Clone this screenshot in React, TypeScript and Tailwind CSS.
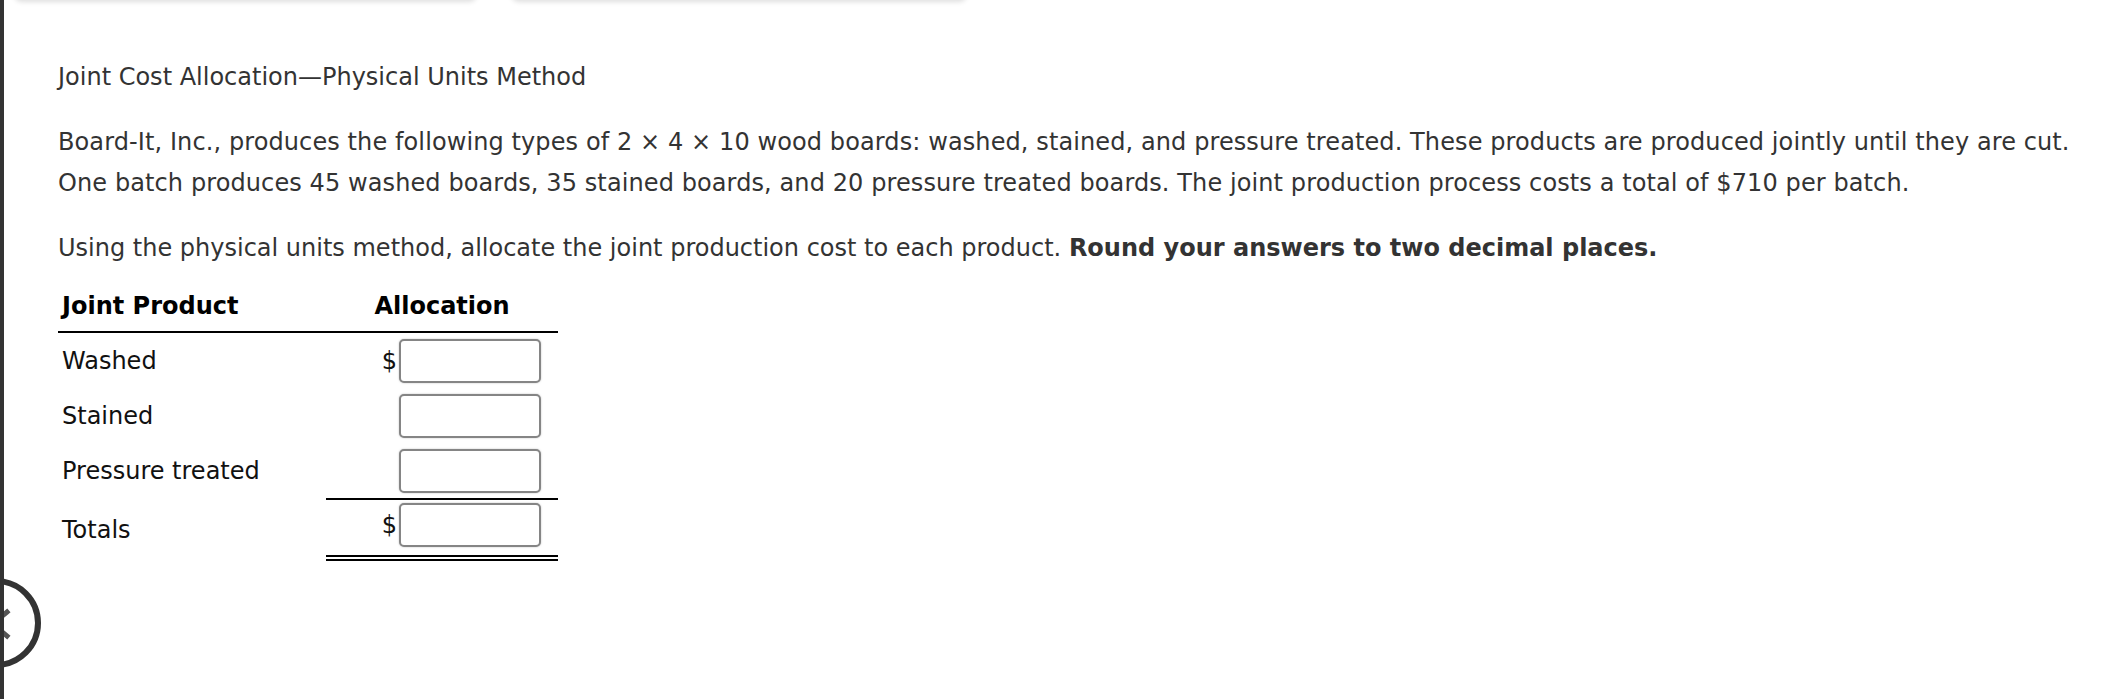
import React from "react";

const font = { fontFamily: '"DejaVu Sans", Verdana, sans-serif' };

function Box() {
  return (
    <div className="w-[142px] h-[44px] rounded-[5px] border-2 border-[#858585] bg-white shadow-[0_0_2px_rgba(0,0,0,0.25)]" />
  );
}

function Row({ label, dollar }: { label: string; dollar?: boolean }) {
  return (
    <>
      <div className="h-[55px] flex items-center pl-[4px] text-[24px] text-[#111]">{label}</div>
      <div className="h-[55px] flex items-center justify-end pr-[17px]">
        <span className="w-[18px] text-right text-[24px] text-[#111] mr-[2px]">{dollar ? "$" : ""}</span>
        <Box />
      </div>
    </>
  );
}

export default function App() {
  return (
    <div className="relative h-[699px] w-full overflow-hidden bg-white border-l-4 border-[#333]" style={font}>
      {/* top cards */}
      <div className="flex h-[20px] -mt-[20px] pl-[10px] gap-[34px]">
        <div className="w-[463px] h-[20px] bg-white rounded-b-lg shadow-[0_2px_5px_rgba(0,0,0,0.13)]" />
        <div className="w-[456px] h-[20px] bg-white rounded-b-lg shadow-[0_2px_5px_rgba(0,0,0,0.13)]" />
      </div>

      <div className="pl-[54px] pt-[57px] text-[#333] text-[24px] leading-[41px]">
        <div className="whitespace-nowrap">Joint Cost Allocation—Physical Units Method</div>
        <div className="mt-[24px] whitespace-nowrap tracking-[0.1px]">
          <div>
            Board-It, Inc., produces the following types of 2 × 4 × 10 wood boards: washed, stained, and pressure
            treated. These products are produced jointly until they are cut.
          </div>
          <div>
            One batch produces 45 washed boards, 35 stained boards, and 20 pressure treated boards. The joint
            production process costs a total of $710 per batch.
          </div>
        </div>
        <div className="mt-[24px] whitespace-nowrap">
          Using the physical units method, allocate the joint production cost to each product.{" "}
          <b className="font-bold">Round your answers to two decimal places.</b>
        </div>

        <div className="mt-[12px] grid grid-cols-[268px_232px] leading-normal">
          <div className="h-[52px] flex items-center pl-[4px] font-bold text-[24px] text-black border-b-2 border-black">
            Joint Product
          </div>
          <div className="h-[52px] flex items-center justify-center font-bold text-[24px] text-black border-b-2 border-black">
            Allocation
          </div>
          <Row label="Washed" dollar />
          <Row label="Stained" />
          <Row label="Pressure treated" />
          <div className="h-[63px] flex items-center pl-[4px] text-[24px] text-[#111]">Totals</div>
          <div className="h-[63px] flex items-start justify-end pt-[3px] pr-[17px] border-t-2 border-b-[6px] border-double border-black [border-top-style:solid]">
            <div className="flex items-center">
              <span className="w-[18px] text-right text-[24px] text-[#111] mr-[2px]">$</span>
              <Box />
            </div>
          </div>
        </div>
      </div>

      {/* side navigation circle */}
      <div className="absolute left-[-53px] top-[578px] w-[90px] h-[90px] rounded-full border-[6px] border-[#333] bg-white">
        <svg className="absolute left-[26px] top-[20px]" width="30" height="44" viewBox="0 0 30 44">
          <path d="M24 8 L10 20 L24 32" fill="none" stroke="#555" strokeWidth="5" strokeLinecap="square" />
        </svg>
      </div>
    </div>
  );
}
